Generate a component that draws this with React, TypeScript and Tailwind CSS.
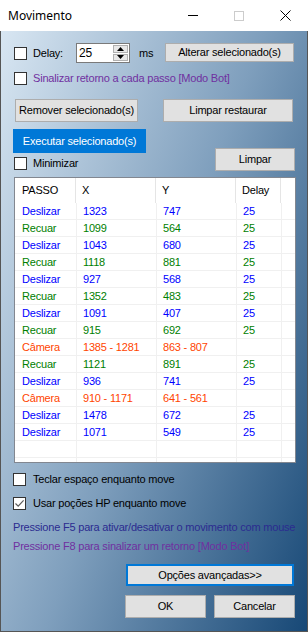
import React from "react";

function Box({ checked }: { checked?: boolean }) {
  return (
    <span className="w-[13px] h-[13px] bg-white border border-[#333333] flex items-center justify-center shrink-0">
      {checked && (
        <svg width="11" height="11" viewBox="0 0 11 11">
          <path d="M1.5 5.5 L4.2 8.2 L9.6 2.4" stroke="#5a5a5a" strokeWidth="1.2" fill="none" />
        </svg>
      )}
    </span>
  );
}

type Row = [string, string, string, string, "d" | "r" | "c"];
const rows: Row[] = [
  ["Deslizar", "1323", "747", "25", "d"],
  ["Recuar", "1099", "564", "25", "r"],
  ["Deslizar", "1043", "680", "25", "d"],
  ["Recuar", "1118", "881", "25", "r"],
  ["Deslizar", "927", "568", "25", "d"],
  ["Recuar", "1352", "483", "25", "r"],
  ["Deslizar", "1091", "407", "25", "d"],
  ["Recuar", "915", "692", "25", "r"],
  ["Câmera", "1385 - 1281", "863 - 807", "", "c"],
  ["Recuar", "1121", "891", "25", "r"],
  ["Deslizar", "936", "741", "25", "d"],
  ["Câmera", "910 - 1171", "641 - 561", "", "c"],
  ["Deslizar", "1478", "672", "25", "d"],
  ["Deslizar", "1071", "549", "25", "d"],
];

function color(k: string) {
  if (k === "d") return "text-[#0000ff]";
  if (k === "r") return "text-[#008000]";
  return "text-[#ff4500]";
}

function ListRow({ r }: { r?: Row }) {
  const c = r ? color(r[4]) : "";
  return (
    <div className={`flex h-[17px] border-b border-[#f0f0f0] shrink-0 ${c}`}>
      <div className="w-[62px] border-r border-[#f0f0f0] pl-[7px] flex items-center">{r ? r[0] : ""}</div>
      <div className="w-[80px] border-r border-[#f0f0f0] pl-[6px] flex items-center">{r ? r[1] : ""}</div>
      <div className="w-[80px] border-r border-[#f0f0f0] pl-[6px] flex items-center">{r ? r[2] : ""}</div>
      <div className="w-[45px] border-r border-[#f0f0f0] pl-[6px] flex items-center">{r ? r[3] : ""}</div>
    </div>
  );
}

const btn =
  "bg-[#e1e1e1] border border-[#adadad] flex items-center justify-center text-black shrink-0";

export default function App() {
  return (
    <div className="w-[308px] h-[632px] overflow-hidden font-['Liberation_Sans',Arial,sans-serif] text-[11px] tracking-[-0.2px] leading-none">
      {/* title bar */}
      <div className="h-[31px] bg-white flex items-center">
        <span className="ml-[8px] text-[12px] tracking-normal font-['Noto_Sans',sans-serif] text-black">Movimento</span>
        <div className="ml-auto flex h-full">
          <div className="w-[46px] h-full flex items-center justify-center">
            <span className="w-[10px] h-px bg-black block" />
          </div>
          <div className="w-[46px] h-full flex items-center justify-center">
            <span className="w-[10px] h-[10px] border border-[#cccccc] block" />
          </div>
          <div className="w-[46px] h-full flex items-center justify-center">
            <svg width="11" height="11" viewBox="0 0 11 11">
              <path d="M0.5 0.5 L10.5 10.5 M10.5 0.5 L0.5 10.5" stroke="#000" strokeWidth="1" />
            </svg>
          </div>
        </div>
      </div>

      {/* body */}
      <div className="h-[601px] border-x border-b border-[#555555] bg-[linear-gradient(110deg,#d8e6f2_0%,#7f9fbd_50%,#174876_100%)] flex flex-col">
        {/* row 1 */}
        <div className="mt-[12px] h-[20px] flex items-center">
          <span className="ml-[13px]">
            <Box />
          </span>
          <span className="ml-[6px] w-[43px] text-black">Delay:</span>
          <div className="w-[54px] h-[20px] bg-white border border-[#7a7a7a] flex items-center">
            <span className="ml-[2px] text-[12px] text-black">25</span>
            <div className="ml-auto mr-px w-[15px] h-[16px] flex flex-col gap-px">
              <div className="h-[8px] bg-[#e8e8e8] border border-[#b0b0b0] flex items-center justify-center">
                <svg width="7" height="4" viewBox="0 0 7 4"><path d="M0 4 L3.5 0 L7 4 Z" fill="#000" /></svg>
              </div>
              <div className="h-[8px] bg-[#e8e8e8] border border-[#b0b0b0] flex items-center justify-center">
                <svg width="7" height="4" viewBox="0 0 7 4"><path d="M0 0 L3.5 4 L7 0 Z" fill="#000" /></svg>
              </div>
            </div>
          </div>
          <span className="ml-[9px] text-black">ms</span>
          <div className={`${btn} ml-auto mr-[13px] w-[129px] h-[19px] self-start`}>Alterar selecionado(s)</div>
        </div>

        {/* row 2 */}
        <div className="mt-[7px] h-[17px] flex items-center">
          <span className="ml-[13px]">
            <Box />
          </span>
          <span className="ml-[6px] text-[#7030a0]">Sinalizar retorno a cada passo [Modo Bot]</span>
        </div>

        {/* row 3 */}
        <div className="mt-[12px] h-[23px] flex">
          <div className={`${btn} ml-[14px] w-[123px] h-[23px]`}>Remover selecionado(s)</div>
          <div className={`${btn} ml-[25px] w-[130px] h-[23px]`}>Limpar restaurar</div>
        </div>

        {/* row 4 */}
        <div className="mt-[7px] flex items-end">
          <div className="ml-[12px] flex flex-col">
            <div className="w-[133px] h-[24px] bg-[#0078d7] border border-[#0078d7] text-white flex items-center justify-center">
              Executar selecionado(s)
            </div>
            <div className="mt-[2px] h-[17px] flex items-center">
              <span className="ml-px">
                <Box />
              </span>
              <span className="ml-[6px] text-black">Minimizar</span>
            </div>
          </div>
          <div className={`${btn} ml-auto mr-[12px] mb-px w-[80px] h-[23px]`}>Limpar</div>
        </div>

        {/* list */}
        <div className="mt-[5px] ml-[13px] w-[282px] h-[286px] bg-white border border-[#828790] overflow-hidden flex flex-col">
          <div className="flex h-[25px] shrink-0 text-black">
            <div className="w-[61px] border-r border-[#e5e5e5] pl-[7px] flex items-center">PASSO</div>
            <div className="w-[80px] border-r border-[#e5e5e5] pl-[6px] flex items-center">X</div>
            <div className="w-[80px] border-r border-[#e5e5e5] pl-[6px] flex items-center">Y</div>
            <div className="w-[45px] border-r border-[#e5e5e5] pl-[6px] flex items-center">Delay</div>
          </div>
          {rows.map((r, i) => (
            <ListRow key={i} r={r} />
          ))}
          <ListRow />
          <ListRow />
        </div>

        {/* checkboxes */}
        <div className="mt-[8px] h-[17px] flex items-center">
          <span className="ml-[12px]">
            <Box />
          </span>
          <span className="ml-[7px] text-black">Teclar espaço enquanto move</span>
        </div>
        <div className="mt-[7px] h-[17px] flex items-center">
          <span className="ml-[12px]">
            <Box checked />
          </span>
          <span className="ml-[7px] text-black">Usar poções HP enquanto move</span>
        </div>

        <div className="mt-[7px] h-[16px] flex items-center ml-[12px] text-[#2b2b90]">
          Pressione F5 para ativar/desativar o movimento com mouse
        </div>
        <div className="mt-[3px] h-[16px] flex items-center ml-[12px] text-[#7030a0]">
          Pressione F8 para sinalizar um retorno [Modo Bot]
        </div>

        <div className="mt-[10px] flex">
          <div className="ml-auto mr-[13px] w-[168px] h-[22px] bg-[#e1e1e1] border-2 border-[#0078d7] flex items-center justify-center text-black">
            Opções avançadas&gt;&gt;
          </div>
        </div>
        <div className="mt-[9px] flex justify-end gap-[8px] mr-[12px]">
          <div className={`${btn} w-[81px] h-[23px]`}>OK</div>
          <div className={`${btn} w-[81px] h-[23px]`}>Cancelar</div>
        </div>
      </div>
    </div>
  );
}
